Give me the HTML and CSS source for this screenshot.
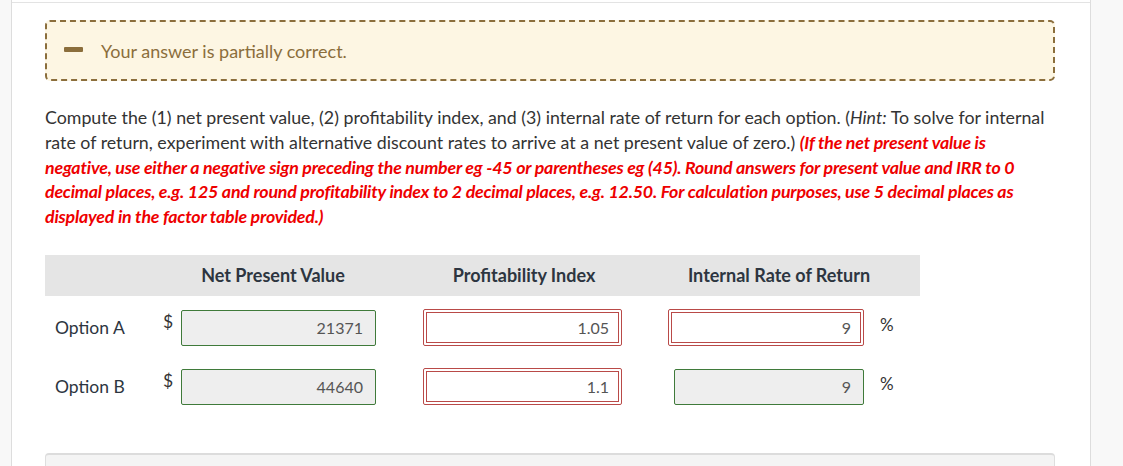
FILE: index.html
```html
<!DOCTYPE html>
<html>
<head>
<meta charset="utf-8">
<link rel="stylesheet" href="styles.css">
</head>
<body>
<div class="page">
  <div class="panel">
    <div class="alert">
      <span class="minus"></span>
      <span class="alert-text">Your answer is partially correct.</span>
    </div>
    <p class="question">Compute the (1) net present value, (2) profitability index, and (3) internal rate of return for each option. (<i>Hint:</i> To solve for internal rate of return, experiment with alternative discount rates to arrive at a net present value of zero.) <b class="red">(If the net present value is negative, use either a negative sign preceding the number eg -45 or parentheses eg (45). Round answers for present value and IRR to 0 decimal places, e.g. 125 and round profitability index to 2 decimal places, e.g. 12.50. For calculation purposes, use 5 decimal places as displayed in the factor table provided.)</b></p>
    <div class="grid">
      <div class="hcell"></div>
      <div class="hcell">Net Present Value</div>
      <div class="hcell">Profitability Index</div>
      <div class="hcell irr-h">Internal Rate of Return</div>

      <div class="cell label">Option A</div>
      <div class="cell npv"><span class="dollar">$</span><div class="inp ok">21371</div></div>
      <div class="cell pi"><div class="bad"><div class="inp">1.05</div></div></div>
      <div class="cell irr"><div class="bad"><div class="inp">9</div></div><span class="pct">%</span></div>

      <div class="cell label">Option B</div>
      <div class="cell npv"><span class="dollar">$</span><div class="inp ok">44640</div></div>
      <div class="cell pi"><div class="bad"><div class="inp">1.1</div></div></div>
      <div class="cell irr"><div class="inp ok irr-ok">9</div><span class="pct">%</span></div>
    </div>
    <div class="bottom-box"></div>
  </div>
</div>
</body>
</html>
```

FILE: styles.css
```css
html, body {
  margin: 0;
  padding: 0;
  background: #f8f8f8;
  height: 100%;
  overflow: hidden;
}
.page {
  margin-left: 11px;
  width: 1078px;
  height: 464px;
  background: #fff;
  border-left: 1px solid #ddd;
  border-right: 1px solid #ddd;
  padding-top: 2px;
  overflow: hidden;
  font-family: Lato, "Open Sans", sans-serif;
  color: #333;
}
.panel {
  border-top: 1px solid #e3e3e3;
  padding: 17px 0 0 33px;
}
.alert {
  width: 1010px;
  height: 61px;
  box-sizing: border-box;
  border: 2px dashed #8b6e3c;
  border-radius: 5px;
  background: #fdf6e3;
  display: flex;
  align-items: center;
  padding-left: 17px;
}
.minus {
  display: inline-block;
  width: 19px;
  height: 5px;
  background: #8b6e3c;
  border-radius: 1px;
  margin-right: 18px;
  margin-top: -3px;
}
.alert-text {
  color: #8b6e3c;
  font-size: 18px;
  margin-top: 1px;
}
.question {
  margin: 24px 0 0 0;
  width: 1004px;
  font-size: 17.8px;
  line-height: 24.75px;
  color: #333;
}
.red {
  color: #ee0000;
  font-style: italic;
  font-weight: bold;
  letter-spacing: -0.2px;
}
.grid {
  margin-top: 26px;
  display: grid;
  grid-template-columns: 105px 246px 256px 268px;
  grid-template-rows: 41px 50px 59px;
  width: 875px;
}
.hcell {
  background: #e5e5e5;
  font-weight: bold;
  font-size: 18px;
  color: #2d3540;
  display: flex;
  align-items: center;
  justify-content: center;
}
.irr-h {
  padding-right: 14px;
}
.cell {
  display: flex;
  align-items: flex-end;
  font-size: 17.5px;
}
.label {
  padding-left: 10px;
  padding-bottom: 8px;
  box-sizing: border-box;
  color: #2d3540;
}
.dollar {
  margin-left: 13px;
  width: 18px;
  padding-bottom: 14px;
  font-size: 17.5px;
}
.inp {
  box-sizing: border-box;
  height: 36px;
  display: flex;
  align-items: center;
  justify-content: flex-end;
  padding-right: 12px;
  font-size: 16px;
  color: #555;
  border-radius: 2px;
}
.ok {
  width: 195px;
  border: 1px solid #3f7a3a;
  background: #eeeeee;
}
.bad {
  box-sizing: border-box;
  border: 1px solid #b94a48;
  border-radius: 2px;
  padding: 2px;
  background: #fff;
}
.bad .inp {
  height: 31px;
  border: 1px solid #b94a48;
  border-radius: 0;
  background: #fff;
  padding-right: 9px;
}
.pi .bad {
  margin-left: 27px;
  width: 199px;
}
.irr .bad {
  margin-left: 16px;
  width: 196px;
}
.irr-ok {
  margin-left: 22px;
  width: 190px;
  padding-right: 12px;
}
.pct {
  margin-left: 16px;
  padding-bottom: 11px;
  font-size: 17px;
}
.bottom-box {
  margin-top: 48px;
  width: 1010px;
  height: 40px;
  background: #f4f4f4;
  border: 1px solid #dedede;
  border-top: 2px solid #dcdcdc;
  border-radius: 4px;
  box-sizing: border-box;
}
```
